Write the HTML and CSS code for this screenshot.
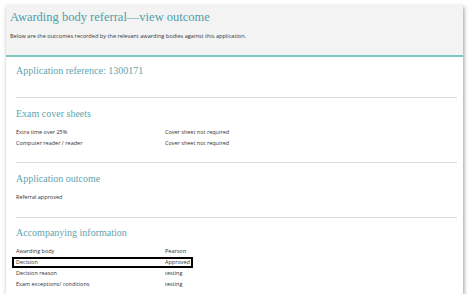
FILE: index.html
```html
<!DOCTYPE html>
<html lang="en">
<head>
    <meta charset="UTF-8">
    <title>Awarding body referral - view outcome</title>
    <link rel="stylesheet" href="styles.css">
</head>
<body>
    <div class="card">
        <header class="card-header">
            <h1>Awarding body referral—view outcome</h1>
            <p class="intro">Below are the outcomes recorded by the relevant awarding bodies against this application.</p>
        </header>
        <main class="card-body">
            <section class="block block-ref">
                <h2>Application reference: 1300171</h2>
            </section>
            <section class="block block-exam">
                <h2>Exam cover sheets</h2>
                <div class="row"><span>Extra time over 25%</span><span>Cover sheet not required</span></div>
                <div class="row"><span>Computer reader / reader</span><span>Cover sheet not required</span></div>
            </section>
            <section class="block block-outcome">
                <h2>Application outcome</h2>
                <div class="row"><span>Referral approved</span></div>
            </section>
            <section class="block block-info">
                <h2>Accompanying information</h2>
                <div class="row"><span>Awarding body</span><span>Pearson</span></div>
                <div class="row highlight"><span>Decision</span><span>Approved</span></div>
                <div class="row"><span>Decision reason</span><span>testing</span></div>
                <div class="row"><span>Exam exceptions/ conditions</span><span>testing</span></div>
            </section>
        </main>
    </div>
</body>
</html>
```

FILE: styles.css
```css
body {
    margin: 0;
    padding: 5px 11px 0 6px;
    background: #fff;
    font-family: "Open Sans", "Liberation Sans", sans-serif;
    color: #333;
}
.card {
    width: 457px;
    background: #fff;
    box-shadow: 1px 2px 4px rgba(0, 0, 0, 0.4);
}
.card-header {
    background-color: #f3f3f3;
    padding: 4px 4px 0 4px;
    height: 46px;
    border-bottom: 2px solid #7ec7be;
}
.card-header h1 {
    margin: 0;
    font-family: "Liberation Serif", serif;
    font-weight: normal;
    font-size: 12.5px;
    line-height: 16px;
    color: #4e9ea9;
}
.intro {
    margin: 7px 0 0 0;
    font-size: 5.6px;
    line-height: 8px;
}
.card-body {
    padding: 0 6px 0 10px;
}
.block {
    border-bottom: 1px solid #dcdcdc;
}
.block:last-child {
    border-bottom: none;
}
.block h2 {
    margin: 0;
    font-family: "Liberation Serif", serif;
    font-weight: normal;
    font-size: 10px;
    line-height: 12px;
    color: #5ea4ae;
}
.block-ref {
    padding: 8px 0 20px;
}
.block-exam {
    padding: 10px 0 13px;
}
.block-outcome {
    padding: 10px 0 14px;
}
.block-info {
    padding: 9px 0 4px;
}
.block h2 + .row {
    margin-top: 7px;
}
.row {
    display: grid;
    grid-template-columns: 149px auto;
    width: max-content;
    font-size: 5.5px;
    line-height: 11px;
}
.row.highlight {
    position: relative;
}
.row.highlight::after {
    content: "";
    position: absolute;
    top: 0;
    bottom: 0;
    left: -4px;
    right: -3px;
    border: 2px solid #000;
}
```
